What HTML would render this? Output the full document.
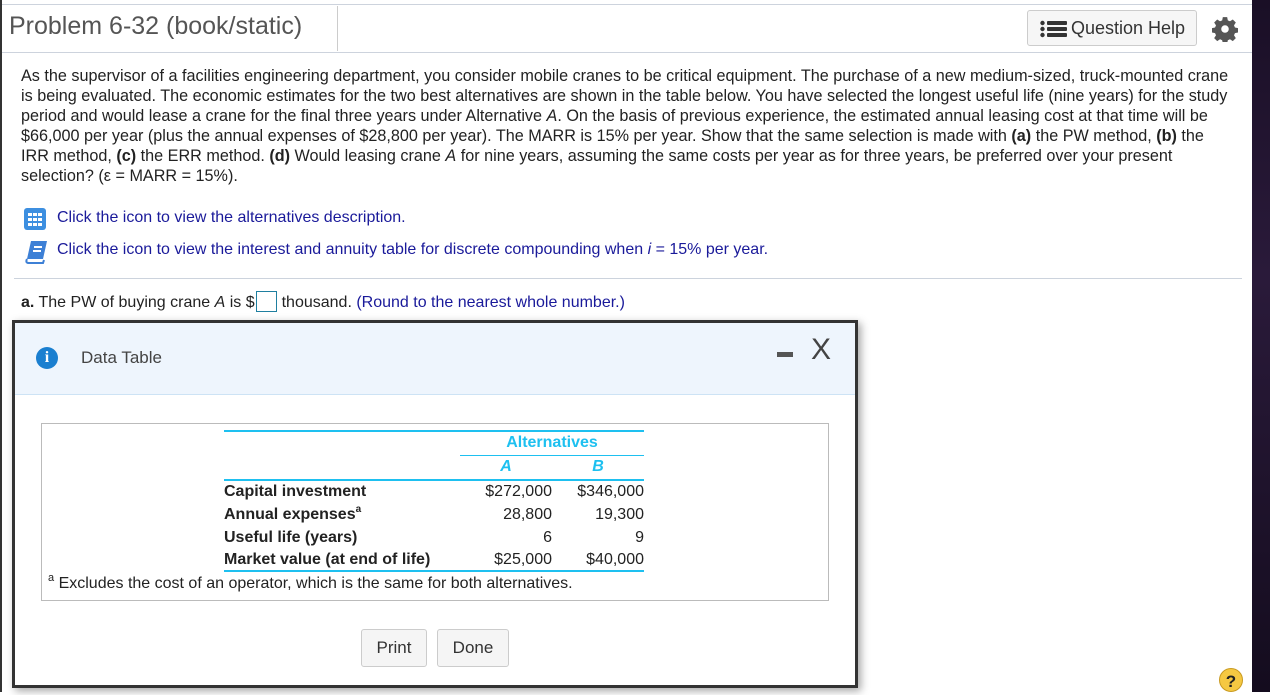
<!DOCTYPE html>
<html><head><style>
body{margin:0;width:1270px;height:692px;overflow:hidden;background:#fff;font-family:"Liberation Sans",Arial,sans-serif;position:relative}
.abs{position:absolute}
.p{left:21px;top:66px;font-size:16.2px;line-height:20px;color:#222;white-space:nowrap}
.link{color:#1a1a9a;font-size:16px}
.modal{left:12px;top:320px;width:840px;height:362px;border:3px solid #333;background:#fff;box-shadow:3px 3px 8px rgba(0,0,0,.35)}
table{border-collapse:collapse;font-size:16px;color:#222}
td{padding:0;height:23px;line-height:20px}
sup{line-height:0;position:relative;top:-1px}
</style></head><body>
<div class="abs" style="left:0;top:0;width:2px;height:692px;background:#333"></div>
<div class="abs" style="left:1252px;top:0;width:18px;height:692px;background:linear-gradient(180deg,#1a0f26,#2a1a3a 40%,#140c1e)"></div>
<div class="abs" style="left:2px;top:4px;width:1250px;height:1px;background:#cdd3dd"></div>
<div class="abs" style="left:2px;top:52px;width:1250px;height:1px;background:#cdd3dd"></div>
<div class="abs" style="left:337px;top:6px;width:1px;height:45px;background:#ccc"></div>
<div class="abs" style="left:9px;top:12px;font-size:25px;color:#555">Problem 6-32 (book/static)</div>
<div class="abs" style="left:1027px;top:10px;width:170px;height:36px;border:1px solid #ccc;border-radius:3px;background:#f6f6f6;box-sizing:border-box"></div>
<svg class="abs" style="left:1040px;top:20px" width="28" height="18"><g fill="#333"><circle cx="2.5" cy="3" r="2.2"/><circle cx="2.5" cy="9" r="2.2"/><circle cx="2.5" cy="15" r="2.2"/><rect x="7" y="1" width="20" height="4" rx="1"/><rect x="7" y="7" width="20" height="4" rx="1"/><rect x="7" y="13" width="20" height="4" rx="1"/></g></svg>
<div class="abs" style="left:1071px;top:18px;font-size:18px;color:#333">Question Help</div>
<svg class="abs" style="left:1212px;top:16px" width="26" height="26" viewBox="0 0 24 24"><path fill="#555" d="M10 1h4l.6 3 2 .9 2.6-1.7 2.8 2.8-1.7 2.6.9 2 3 .6v4l-3 .6-.9 2 1.7 2.6-2.8 2.8-2.6-1.7-2 .9-.6 3h-4l-.6-3-2-.9-2.6 1.7-2.8-2.8 1.7-2.6-.9-2-3-.6v-4l3-.6.9-2-1.7-2.6 2.8-2.8 2.6 1.7 2-.9z"/><circle cx="12" cy="12" r="3.5" fill="#fff"/></svg>
<div class="abs p">As the supervisor of a facilities engineering department, you consider mobile cranes to be critical equipment. The purchase of a new medium-sized, truck-mounted crane<br>is being evaluated. The economic estimates for the two best alternatives are shown in the table below. You have selected the longest useful life (nine years) for the study<br>period and would lease a crane for the final three years under Alternative <i>A</i>. On the basis of previous experience, the estimated annual leasing cost at that time will be<br>$66,000 per year (plus the annual expenses of $28,800 per year). The MARR is 15% per year. Show that the same selection is made with <b>(a)</b> the PW method, <b>(b)</b> the<br>IRR method, <b>(c)</b> the ERR method. <b>(d)</b> Would leasing crane <i>A</i> for nine years, assuming the same costs per year as for three years, be preferred over your present<br>selection? (ε = MARR = 15%).</div>
<svg class="abs" style="left:24px;top:208px" width="22" height="22"><rect width="22" height="22" rx="3" fill="#3d8fe0"/><g fill="#fff"><rect x="4" y="5" width="4" height="3"/><rect x="9" y="5" width="4" height="3"/><rect x="14" y="5" width="4" height="3"/><rect x="4" y="10" width="4" height="3"/><rect x="9" y="10" width="4" height="3"/><rect x="14" y="10" width="4" height="3"/><rect x="4" y="15" width="4" height="3"/><rect x="9" y="15" width="4" height="3"/><rect x="14" y="15" width="4" height="3"/></g></svg>
<div class="abs link" style="left:57px;top:209px">Click the icon to view the alternatives description.</div>
<svg class="abs" style="left:24px;top:240px" width="24" height="24"><path d="M7 1h16l-4 18H3z" fill="#3d80d6"/><path d="M3 19q-2 4 2 4h14l1-3" stroke="#3d80d6" stroke-width="2" fill="none"/><path d="M10 7h8M9 11h8" stroke="#fff" stroke-width="2"/></svg>
<div class="abs link" style="left:57px;top:241px">Click the icon to view the interest and annuity table for discrete compounding when <i>i</i> = 15% per year.</div>
<div class="abs" style="left:14px;top:278px;width:1228px;height:1px;background:#ccd3dd"></div>
<div class="abs" style="left:21px;top:291px;font-size:16px;color:#222"><b>a.</b> The PW of buying crane <i>A</i> is $<span style="display:inline-block;width:19px;height:19px;border:1px solid #1f7fa0;vertical-align:-5px;margin:0 5px 0 1px"></span>thousand. <span style="color:#1a1a9a">(Round to the nearest whole number.)</span></div>
<div class="abs modal">
 <div style="height:71px;background:#eef5fd;border-bottom:1px solid #cde3f5;position:relative">
  <div class="abs" style="left:21px;top:24px;width:22px;height:22px;border-radius:50%;background:#1a7fd0;color:#fff;font:bold 16px 'Liberation Serif',serif;text-align:center;line-height:22px">i</div>
  <div class="abs" style="left:66px;top:25px;font-size:17px;color:#444">Data Table</div>
  <div class="abs" style="left:762px;top:29px;width:16px;height:5px;background:#555"></div>
  <div class="abs" style="left:796px;top:10px;font-size:30px;color:#444">X</div>
 </div>
 <div class="abs" style="left:26px;top:100px;width:786px;height:176px;border:1px solid #bbb">
  <table class="abs" style="left:182px;top:6px;width:420px">
   <tr style="border-top:2px solid #1ec0f0"><td style="width:236px"></td><td colspan="2" style="text-align:center;color:#1ec0f0;font-weight:bold;border-bottom:1px solid #1ec0f0;height:22px">Alternatives</td></tr>
   <tr style="border-bottom:2px solid #1ec0f0"><td></td><td style="text-align:center;color:#1ec0f0;font-weight:bold;font-style:italic">A</td><td style="text-align:center;color:#1ec0f0;font-weight:bold;font-style:italic">B</td></tr>
   <tr><td><b>Capital investment</b></td><td style="text-align:right">$272,000</td><td style="text-align:right">$346,000</td></tr>
   <tr><td><b>Annual expenses<sup style="font-size:10px">a</sup></b></td><td style="text-align:right">28,800</td><td style="text-align:right">19,300</td></tr>
   <tr><td><b>Useful life (years)</b></td><td style="text-align:right">6</td><td style="text-align:right">9</td></tr>
   <tr style="border-bottom:2px solid #1ec0f0"><td style="height:20px"><b>Market value (at end of life)</b></td><td style="text-align:right;height:20px">$25,000</td><td style="text-align:right;height:20px">$40,000</td></tr>
  </table>
  <div class="abs" style="left:6px;top:151px;font-size:16px;color:#222"><sup style="font-size:11px">a</sup> Excludes the cost of an operator, which is the same for both alternatives.</div>
 </div>
 <div class="abs" style="left:346px;top:306px;width:66px;height:38px;border:1px solid #ccc;border-radius:3px;background:#f5f5f5;font-size:17px;color:#333;text-align:center;line-height:36px;box-sizing:border-box">Print</div>
 <div class="abs" style="left:422px;top:306px;width:72px;height:38px;border:1px solid #ccc;border-radius:3px;background:#f5f5f5;font-size:17px;color:#333;text-align:center;line-height:36px;box-sizing:border-box">Done</div>
</div>
<div class="abs" style="left:1219px;top:668px;width:24px;height:24px;border-radius:50%;background:#f5c842;border:1px solid #c99a20;font:bold 17px 'Liberation Sans';text-align:center;line-height:26px;color:#222;box-sizing:border-box">?</div>
</body></html>
